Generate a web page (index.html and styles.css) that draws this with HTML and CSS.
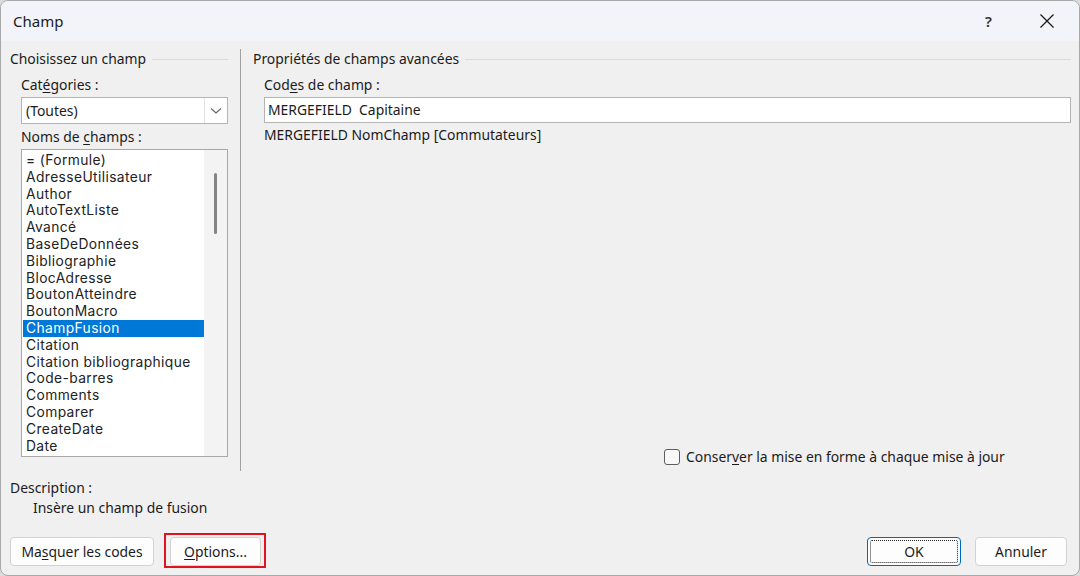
FILE: index.html
```html
<!DOCTYPE html>
<html>

<head>
  <meta charset="UTF-8">
  <link rel="stylesheet" href="styles.css">
  <title>Champ</title>
</head>

<body>
<div class="window">
  <div class="titlebar">
    <span class="title">Champ</span>
    <span class="help">?</span>
    <span class="close">
      <svg width="16" height="16" viewBox="0 0 16 16">
        <path d="M1.5 1.5 L14.5 14.5 M14.5 1.5 L1.5 14.5" stroke="#1a1a1a" stroke-width="1.3" fill="none"/>
      </svg>
    </span>
  </div>

  <div class="content">
    <div class="main">
      <div class="left">
        <div class="group-title"><span>Choisissez un champ</span></div>
        <div class="label">Cat<u>é</u>gories :</div>
        <div class="select">
          <span class="select-value">(Toutes)</span>
          <span class="select-btn">
            <svg width="12" height="8" viewBox="0 0 12 8">
              <path d="M1 1.5 L6 6 L11 1.5" stroke="#666" stroke-width="1.2" fill="none"/>
            </svg>
          </span>
        </div>
        <div class="label label-list">Noms de <u>c</u>hamps :</div>
        <div class="listbox">
          <div class="items">
            <div class="item">= (Formule)</div>
            <div class="item">AdresseUtilisateur</div>
            <div class="item">Author</div>
            <div class="item">AutoTextListe</div>
            <div class="item">Avancé</div>
            <div class="item">BaseDeDonnées</div>
            <div class="item">Bibliographie</div>
            <div class="item">BlocAdresse</div>
            <div class="item">BoutonAtteindre</div>
            <div class="item">BoutonMacro</div>
            <div class="item selected">ChampFusion</div>
            <div class="item">Citation</div>
            <div class="item">Citation bibliographique</div>
            <div class="item">Code-barres</div>
            <div class="item">Comments</div>
            <div class="item">Comparer</div>
            <div class="item">CreateDate</div>
            <div class="item">Date</div>
          </div>
          <div class="scrollbar"><div class="thumb"></div></div>
        </div>
      </div>

      <div class="separator"></div>

      <div class="right">
        <div class="group-title"><span>Propriétés de champs avancées</span></div>
        <div class="label">Cod<u>e</u>s de champ :</div>
        <div class="textbox">MERGEFIELD&nbsp; Capitaine</div>
        <div class="hint">MERGEFIELD NomChamp [Commutateurs]</div>
        <label class="check-row">
          <span class="checkbox"></span>
          <span>Conser<u>v</u>er la mise en forme à chaque mise à jour</span>
        </label>
      </div>
    </div>

    <div class="description">
      <div>Description :</div>
      <div class="desc-text">Insère un champ de fusion</div>
    </div>

    <div class="footer">
      <button class="btn btn-codes">Ma<u>s</u>quer les codes</button>
      <button class="btn btn-options"><u>O</u>ptions...</button>
      <div class="spacer"></div>
      <button class="btn btn-ok">OK</button>
      <button class="btn btn-cancel">Annuler</button>
    </div>
  </div>
</div>
</body>
</html>
```

FILE: styles.css
```css
* {
    box-sizing: border-box;
}

body {
    margin: 0;
    padding: 0;
    width: 1080px;
    height: 576px;
    background: #dcdcdc;
    font-family: 'Noto Sans', 'Open Sans', sans-serif;
    font-size: 13.9px;
    color: #1b1b1b;
    overflow: hidden;
}

u {
    text-decoration-thickness: 1px;
    text-underline-offset: 2px;
}

.window {
    width: 1080px;
    height: 576px;
    border: 1px solid #a8a8a8;
    border-radius: 8px;
    background: #f0f0f0;
    overflow: hidden;
    display: flex;
    flex-direction: column;
}

.titlebar {
    height: 40px;
    flex: none;
    display: flex;
    align-items: center;
    background: #f2f4f9;
    padding-left: 12px;
    padding-bottom: 1px;
}

.title {
    font-size: 15px;
    flex: 1;
}

.help {
    font-size: 15px;
    font-weight: 600;
    color: #333;
    width: 54px;
}

.close {
    width: 40px;
    display: flex;
    padding-top: 1px;
}

.content {
    flex: 1;
    display: flex;
    flex-direction: column;
    padding: 8px 8px 0 9px;
}

.main {
    display: flex;
    height: 422px;
}

.left {
    width: 218px;
    display: flex;
    flex-direction: column;
}

.separator {
    width: 1px;
    background: #a0a0a0;
    margin: 0 12px 0 12px;
}

.right {
    flex: 1;
    display: flex;
    flex-direction: column;
}

.group-title {
    display: flex;
    align-items: center;
    height: 18px;
    line-height: 18px;
    margin-top: 1px;
}

.group-title::after {
    content: "";
    flex: 1;
    height: 1px;
    background: #dadada;
    margin-left: 6px;
}

.label {
    margin-top: 8px;
    padding-left: 11px;
    line-height: 18px;
}

.label-list {
    margin-top: 4px;
}

.select {
    margin: 3px 0 0 11px;
    height: 27px;
    border: 1px solid #b4b4b4;
    background: #fff;
    display: flex;
    align-items: center;
}

.select-value {
    flex: 1;
    padding-left: 4px;
}

.select-btn {
    width: 23px;
    height: 25px;
    border-left: 1px solid #e2e2e2;
    display: flex;
    align-items: center;
    justify-content: center;
}

.listbox {
    margin: 3px 0 0 11px;
    height: 308px;
    border: 1px solid #a8a8a8;
    background: #fff;
    display: flex;
    overflow: hidden;
}

.items {
    flex: 1;
    padding: 2px 0 0 1px;
}

.item {
    font-family: Inter, 'Noto Sans', sans-serif;
    font-size: 13.8px;
    letter-spacing: 0.4px;
    height: 16.8px;
    line-height: 16.8px;
    padding-left: 3px;
    white-space: nowrap;
    color: #222;
}

.item.selected {
    background: #0078d7;
    color: #fff;
}

.scrollbar {
    width: 23px;
    background: #f3f3f3;
    position: relative;
}

.thumb {
    position: absolute;
    left: 10px;
    top: 23px;
    width: 3px;
    height: 61px;
    background: #858585;
    border-radius: 2px;
}

.textbox {
    margin: 3px 0 0 11px;
    height: 26px;
    border: 1px solid #b4b4b4;
    background: #fff;
    padding-left: 3px;
    line-height: 24px;
}

.hint {
    margin: 3px 0 0 11px;
    line-height: 18px;
}

.check-row {
    margin-top: auto;
    margin-bottom: 5px;
    margin-left: 411px;
    display: flex;
    align-items: center;
    gap: 6px;
    line-height: 18px;
}

.checkbox {
    width: 16px;
    height: 16px;
    border: 1px solid #5f5f5f;
    border-radius: 3px;
    background: #f8f8f8;
}

.description {
    margin-top: 7px;
    line-height: 20px;
}

.desc-text {
    padding-left: 23px;
}

.footer {
    display: flex;
    align-items: center;
    margin-top: 19px;
}

.spacer {
    flex: 1;
}

.btn {
    font: inherit;
    color: #1b1b1b;
    height: 29px;
    background: #fdfdfd;
    border: 1px solid #d2d2d2;
    border-radius: 4px;
    padding: 0;
}

.btn-codes {
    width: 144px;
}

.btn-options {
    width: 91px;
    margin-left: 16px;
    position: relative;
}

/* red annotation frame */
.btn-options::before {
    content: "";
    position: absolute;
    left: -7px;
    right: -6px;
    top: -5px;
    bottom: -3px;
    border: 2px solid #e0141e;
}

.btn-ok {
    width: 94px;
    border: 1px solid #0067c0;
    position: relative;
}

.btn-ok::after {
    content: "";
    position: absolute;
    inset: 2px;
    border: 1px dotted #222;
    border-radius: 2px;
}

.btn-cancel {
    width: 92px;
    margin-left: 14px;
    margin-right: 4px;
}
```
